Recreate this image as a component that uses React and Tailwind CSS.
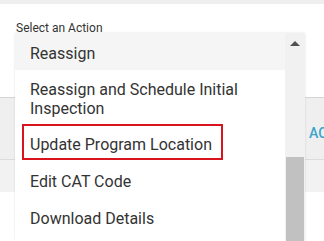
import React from "react";

const actions = [
  "Reassign",
  "Reassign and Schedule Initial Inspection",
  "Update Program Location",
  "Edit CAT Code",
  "Download Details",
];

export default function App() {
  return (
    <div className="relative w-[324px] h-[241px] overflow-hidden bg-white font-['Roboto',sans-serif] text-[#333]">
      {/* page behind the menu */}
      <div className="h-[4px] bg-[#efefef]" />
      <div className="pl-4 pt-[17px] text-[12px] leading-[14px] text-[#333]">Select an Action</div>
      <div className="mt-[62px] h-[62px] border-t border-[#d4d4d4] bg-[#efefef] flex items-start justify-end pt-[27px]">
        <span className="w-[15px] text-[14px] leading-[16px] font-medium text-[#3aa5c8] overflow-hidden whitespace-nowrap">AC</span>
      </div>
      <div className="h-[33px] border-t border-[#dcdcdc] bg-[#f2f2f2]" />

      {/* open dropdown */}
      <div className="absolute left-[15px] top-[33px] bottom-0 w-[290px] flex bg-white shadow-[0_0_2px_rgba(0,0,0,0.12)]">
        <ul className="flex-1 text-[16px] leading-[19px]">
          {actions.map((action, index) => (
            <li
              key={index}
              className={`relative pl-[15px] pr-4 ${
                index === 0 ? "bg-[#f5f5f5] pt-[11px] pb-[7px]" : index === 1 ? "pt-[10px] pb-[8px]" : "py-[9px]"
              }`}
            >
              {action}
              {index === 2 && (
                <span className="absolute left-[7px] top-[-2px] w-[201px] h-[36px] border-2 border-[#d9141c]" />
              )}
            </li>
          ))}
        </ul>
        <div className="w-[20px] bg-[#f1f1f1] flex flex-col items-center">
          <div className="mt-[8px] w-0 h-0 border-x-[5px] border-x-transparent border-b-[5px] border-b-[#505050]" />
          <div className="mt-[111px] flex-1 w-[18px] bg-[#c1c1c1]" />
        </div>
      </div>
    </div>
  );
}
